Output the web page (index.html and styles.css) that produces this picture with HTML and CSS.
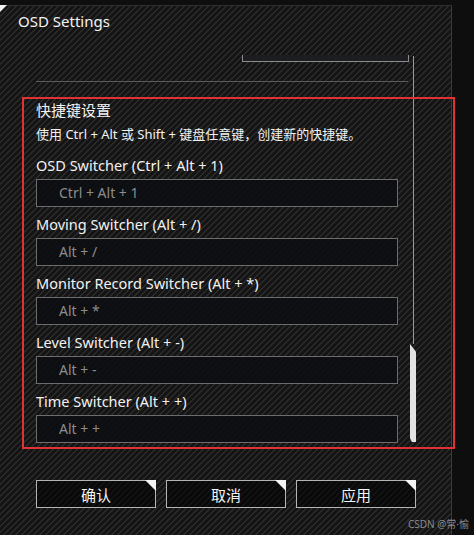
FILE: index.html
```html
<!DOCTYPE html>
<html lang="zh-CN">
<head>
    <meta charset="UTF-8">
    <meta name="viewport" content="width=device-width, initial-scale=1.0">
    <title>OSD Settings</title>
    <link rel="stylesheet" href="styles.css">
</head>
<body>
    <div class="window">
        <div class="title">OSD Settings</div>

        <div class="scroll">
            <div class="content">
                <div class="cut-row">
                    <div class="cut-input"></div>
                </div>
                <div class="divider"></div>

                <div class="section">
                    <div class="heading">快捷键设置</div>
                    <div class="desc">使用 Ctrl + Alt 或 Shift + 键盘任意键，创建新的快捷键。</div>

                    <div class="item">
                        <div class="label">OSD Switcher (Ctrl + Alt + 1)</div>
                        <div class="field">Ctrl + Alt + 1</div>
                    </div>
                    <div class="item">
                        <div class="label">Moving Switcher (Alt + /)</div>
                        <div class="field">Alt + /</div>
                    </div>
                    <div class="item">
                        <div class="label">Monitor Record Switcher (Alt + *)</div>
                        <div class="field">Alt + *</div>
                    </div>
                    <div class="item">
                        <div class="label">Level Switcher (Alt + -)</div>
                        <div class="field">Alt + -</div>
                    </div>
                    <div class="item">
                        <div class="label">Time Switcher (Alt + +)</div>
                        <div class="field">Alt + +</div>
                    </div>
                </div>
            </div>
            <div class="scrollbar">
                <div class="track"></div>
                <div class="thumb"></div>
            </div>
        </div>

        <div class="buttons">
            <button class="btn">确认</button>
            <button class="btn">取消</button>
            <button class="btn">应用</button>
        </div>
    </div>

    <div class="highlight"></div>
    <div class="watermark">CSDN @常·愉</div>
</body>
</html>
```

FILE: styles.css
```css
body {
    margin: 0;
    width: 474px;
    height: 535px;
    overflow: hidden;
    background-color: #0e0e0e;
    font-family: "Noto Sans", "Noto Sans CJK SC", sans-serif;
    color: #f2f2f2;
    position: relative;
}
.window {
    position: relative;
    margin-top: 5px;
    width: 452px;
    height: 530px;
    box-sizing: border-box;
    border-top: 1px solid #2e2e2e;
    border-right: 1px solid #3a3a3a;
    background-color: #141414;
    background-image: repeating-linear-gradient(135deg, #141414 0 2.7px, #2a2a2a 2.7px 4.24px);
}
.window::before {
    content: "";
    position: absolute;
    left: 0;
    top: -1px;
    width: 7px;
    height: 7px;
    background: #f4f4f4;
    clip-path: polygon(0 0, 100% 0, 0 100%);
}
.title {
    padding: 5px 0 0 18px;
    font-size: 15px;
    line-height: 20px;
}
.scroll {
    display: flex;
    margin-top: 19px;
    padding-left: 36px;
    height: 395px;
    overflow: hidden;
}
.content {
    width: 373px;
}
.cut-row {
    display: flex;
    justify-content: flex-end;
    align-items: flex-end;
    height: 12px;
}
.cut-input {
    width: 165px;
    height: 6px;
    border: 1px solid #8c8c8c;
    border-top: none;
    background: #1b1d21;
}
.divider {
    width: 372px;
    height: 1px;
    margin-top: 19px;
    background: #5a5a5a;
}
.section {
    margin-top: 18px;
}
.heading {
    font-size: 15px;
    line-height: 20px;
}
.desc {
    margin-top: 4px;
    margin-bottom: 10px;
    font-size: 13px;
    line-height: 20px;
}
.item {
    margin-bottom: 6px;
}
.label {
    font-size: 14.5px;
    line-height: 22px;
}
.field {
    width: 362px;
    height: 28px;
    margin-top: 3px;
    box-sizing: border-box;
    border: 1px solid #6c6c6c;
    background: rgba(12, 14, 18, 0.88);
    padding-left: 22px;
    font-size: 14px;
    line-height: 26px;
    color: #8c8c8c;
}
.scrollbar {
    display: flex;
    flex-direction: column;
    align-items: center;
    width: 6px;
    margin-left: 1px;
    padding: 6px 0 3px;
}
.track {
    flex: 1;
    width: 1px;
    background: #9a9a9a;
}
.thumb {
    width: 6px;
    height: 98px;
    background: #e2e2e2;
    clip-path: polygon(0 0, 100% 8%, 100% 100%, 30% 100%, 0 96%);
}
.buttons {
    display: flex;
    gap: 10px;
    margin-top: 35px;
    padding-left: 36px;
}
.btn {
    position: relative;
    width: 120px;
    height: 28px;
    border: 1px solid #b4b4b4;
    background: rgba(0, 0, 0, 0.55);
    color: #f4f4f4;
    font-family: "Noto Sans CJK SC", sans-serif;
    font-size: 15px;
    padding: 0;
}
.btn::after {
    content: "";
    position: absolute;
    top: -1px;
    right: -1px;
    width: 11px;
    height: 11px;
    background: #f4f4f4;
    clip-path: polygon(0 0, 100% 0, 100% 100%);
}
.highlight {
    position: absolute;
    left: 22px;
    top: 97px;
    width: 433px;
    height: 352px;
    box-sizing: border-box;
    border: 2px solid #e03234;
}
.watermark {
    position: absolute;
    left: 408px;
    top: 516px;
    font-size: 10px;
    color: #8a8a8a;
}
```
